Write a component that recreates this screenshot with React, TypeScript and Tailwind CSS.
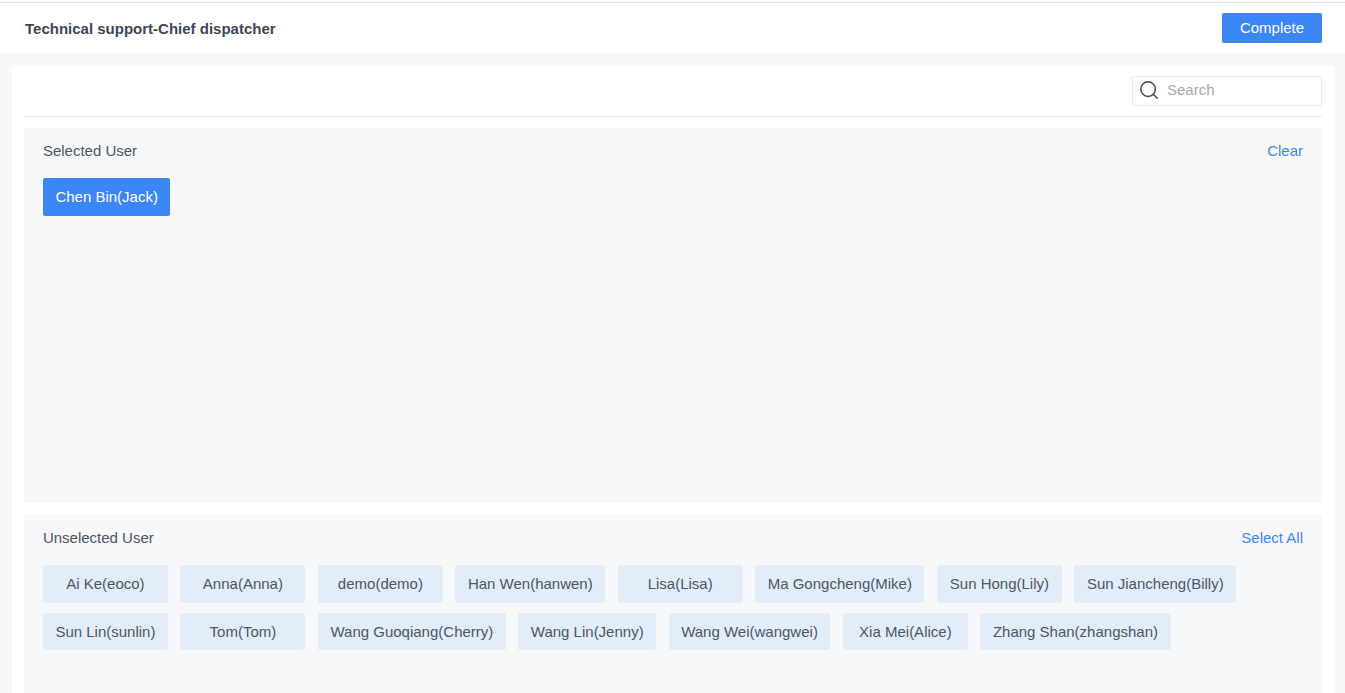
import { Search } from "lucide-react";

const unselectedUsers = [
  "Ai Ke(eoco)",
  "Anna(Anna)",
  "demo(demo)",
  "Han Wen(hanwen)",
  "Lisa(Lisa)",
  "Ma Gongcheng(Mike)",
  "Sun Hong(Lily)",
  "Sun Jiancheng(Billy)",
  "Sun Lin(sunlin)",
  "Tom(Tom)",
  "Wang Guoqiang(Cherry)",
  "Wang Lin(Jenny)",
  "Wang Wei(wangwei)",
  "Xia Mei(Alice)",
  "Zhang Shan(zhangshan)",
];

function UserChip({ name, selected }: { name: string; selected?: boolean }) {
  return (
    <div
      className={`min-w-[125px] rounded-[2px] px-[12.5px] pb-[7px] pt-[8px] text-center text-[15px] leading-[22.5px] ${
        selected ? "bg-[#3a86f5] text-white" : "bg-[#e3edfa] text-[#4b5563]"
      }`}
    >
      {name}
    </div>
  );
}

export default function App() {
  return (
    <div className="h-[693px] overflow-hidden bg-[#f7f8fa] font-['Liberation_Sans',Arial,sans-serif]">
      <div className="h-[2px] bg-white" />
      {/* Header */}
      <header className="flex h-[51px] items-center justify-between border-t border-[#dcdfe3] bg-white pl-[25px] pr-[23px]">
        <h1 className="translate-y-px text-[15px] font-bold text-[#3d4657]">Technical support-Chief dispatcher</h1>
        <button className="h-[30px] w-[100px] rounded-[2px] bg-[#3a86f5] text-[15px] text-white">Complete</button>
      </header>

      {/* Card */}
      <main className="ml-[12px] mr-[10px] mt-[13px] h-[640px] bg-white px-[12px] pr-[13px] pt-[10px]">
        <div className="flex justify-end border-b border-[#e8eaed] pb-[10px]">
          <label className="flex h-[30px] w-[190px] items-center rounded-[2px] border border-[#e8eaed] pl-[5px]">
            <Search className="size-[22px] -translate-y-px text-[#3d4657]" strokeWidth={1.6} />
            <input
              placeholder="Search"
              className="ml-[7px] w-[140px] -translate-y-px bg-transparent text-[15px] outline-none placeholder:text-[#a3aab5]"
            />
          </label>
        </div>

        <section className="mt-[11px] h-[375px] bg-[#f7f8fa] pl-[18.9px] pr-[19px] pt-[14px]">
          <div className="flex items-center justify-between text-[15px] leading-[18px]">
            <span className="text-[#4b5563]">Selected User</span>
            <button className="text-[#3a86f5]">Clear</button>
          </div>
          <div className="mt-[18.2px] flex flex-wrap gap-x-[12.5px] gap-y-[10px]">
            <UserChip name="Chen Bin(Jack)" selected />
          </div>
        </section>

        <section className="mt-[12px] h-[200px] bg-[#f7f8fa] pl-[18.9px] pr-[19px] pt-[14px]">
          <div className="flex items-center justify-between text-[15px] leading-[18px]">
            <span className="text-[#4b5563]">Unselected User</span>
            <button className="text-[#3a86f5]">Select All</button>
          </div>
          <div className="mt-[18.2px] flex flex-wrap gap-x-[12.5px] gap-y-[10px]">
            {unselectedUsers.map((name) => (
              <UserChip key={name} name={name} />
            ))}
          </div>
        </section>
      </main>
    </div>
  );
}
